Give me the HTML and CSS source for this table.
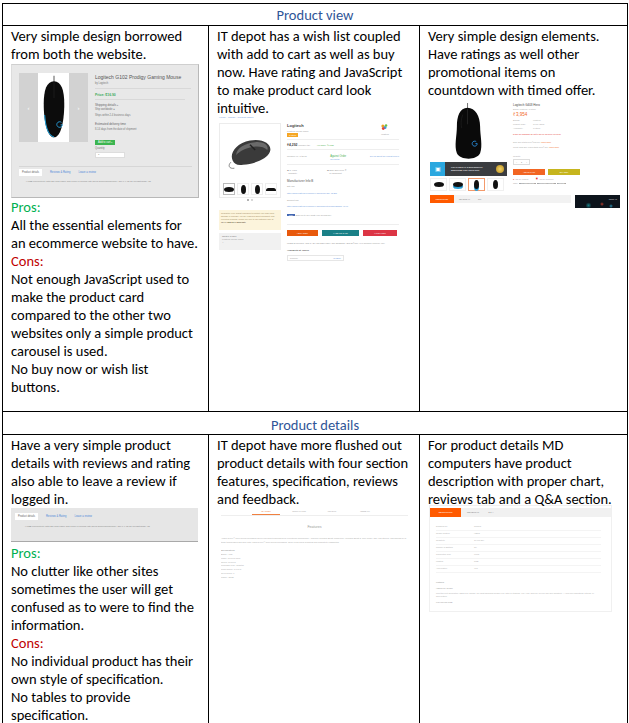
FILE: index.html
```html
<!DOCTYPE html>
<html>
<head>
<meta charset="utf-8">
<link rel="stylesheet" href="styles.css">
</head>
<body>
<table class="doc">
  <colgroup><col class="c1"><col class="c2"><col class="c3"></colgroup>
  <tr><th colspan="3" class="head">Product view</th></tr>
  <tr class="r1">
    <td>
      <div class="txt">Very simple design borrowed<br>from both the website.</div>
      <div class="shot sa">
        <div class="sa-top">
          <div class="carousel">
            <div class="c-side">‹</div>
            <div class="c-mid">
              <svg class="m102" viewBox="0 0 30 68" width="28" height="65">
                <path d="M15 0 V7" stroke="#222" stroke-width="0.8" fill="none"/>
                <path d="M15 6 C7 6 4 16 4 30 C4 50 8 66 15 66 C22 66 26 50 26 30 C26 16 23 6 15 6Z" fill="#0c0c0c"/>
                <path d="M15 7 V24" stroke="#2a2a2a" stroke-width="0.6"/>
                <path d="M5 42 C6 56 9 64 15 65.5" stroke="#1e9fd8" stroke-width="1.1" fill="none"/>
                <path d="M23 50 a3 3 0 1 0 1 2.5 h-2" stroke="#2aa7e8" stroke-width="0.9" fill="none"/>
              </svg>
            </div>
            <div class="c-side">›</div>
          </div>
          <div class="sa-info">
            <div class="sa-title">Logitech G102 Prodigy Gaming Mouse</div>
            <div class="sa-by">by Logitech</div>
            <div class="sa-price">Price: $16.90</div>
            <div class="sa-t">Shipping details ▪</div>
            <div class="sa-s s1">Ship worldwide ●</div>
            <div class="sa-s s2">Ships within 2-4 business days</div>
            <div class="sa-t t2">Estimated delivery time</div>
            <div class="sa-s s2">8-14 days from the date of shipment</div>
            <div class="sa-btn">Add to cart ▪</div>
            <div class="sa-s s2">Quantity</div>
            <div class="sa-qty">1</div>
          </div>
        </div>
        <div class="sa-tabs"><span class="tab-on">Product details</span><span class="tab-link">Reviews &amp; Rating</span><span class="tab-link">Leave a review</span></div>
        <div class="sa-bul">• USB connectivity with 2m long cable and 1000Hz polling rate,wired Dimensions(mm): 116.6 x 62.15 Weight(gms): 85</div>
      </div>
      <div class="txt"><span class="pros">Pros:</span><br>All the essential elements for<br>an ecommerce website to have.<br><span class="cons">Cons:</span><br>Not enough JavaScript used to<br>make the product card<br>compared to the other two<br>websites only a simple product<br>carousel is used.<br>No buy now or wish list<br>buttons.</div>
    </td>
    <td>
      <div class="txt">IT depot has a wish list coupled<br>with add to cart as well as buy<br>now. Have rating and JavaScript<br>to make product card look<br>intuitive.</div>
      <div class="shot sb">
        <div class="sb-crumb">Home › Mouse › Product Name</div>
        <div class="sb-main">
          <div class="sb-left">
            <div class="sb-imgbox">
              <div class="sb-photo">
                <svg viewBox="0 0 60 40" width="52" height="35">
                  <path d="M8 30 C4 34 6 38 12 37" stroke="#444" stroke-width="0.7" fill="none"/>
                  <path d="M10 28 C6 20 14 8 30 5 C46 2 56 10 53 18 C50 26 36 32 22 33 C15 34 12 32 10 28Z" fill="#3a3a3a"/>
                  <path d="M14 22 C14 14 24 8 36 7 C46 6 52 11 50 16 C46 12 38 11 30 13 C22 15 16 19 14 22Z" fill="#6a6a6a"/>
                  <path d="M30 10 L36 16" stroke="#222" stroke-width="1.6"/>
                </svg>
              </div>
              <div class="sb-thumbs">
                <span class="th on"><i class="blob h"></i></span><span class="th"><i class="blob v"></i></span><span class="th"><i class="blob v"></i></span><span class="th"><i class="blob f"></i></span>
              </div>
            </div>
            <div class="sb-dots"><i></i><i class="lt"></i></div>
            <div class="sb-note">Guarantee Free Transit Insurance to protect your order from damage in pilferage. For any enquiries about availability and expected products, please feel free to call customer care at <b>(044)-4022 3647 (Mon-Sat)</b></div>
            <div class="sb-box"><b>What's in Box</b><br>Logitech Mouse M100<br>&nbsp;•</div>
          </div>
          <div class="sb-right">
            <div class="sb-head">
              <div>
                <div class="sb-brand">Logitech</div>
                <div class="sb-sub">Logitech Mouse M100</div>
                <div class="sb-badge">In Stock</div>
              </div>
              <div class="sb-logo">
                <svg viewBox="0 0 20 12" width="14" height="9"><circle cx="7" cy="4" r="2.2" fill="#f0a020"/><circle cx="10" cy="6" r="2.2" fill="#3d9be9"/><circle cx="7.5" cy="7.5" r="2" fill="#e2403b"/><circle cx="11.5" cy="3" r="1.8" fill="#6cc04a"/></svg>
                <div>Logitech</div>
              </div>
            </div>
            <div class="sb-price"><b>₹4,292</b> <span>Inclusive tax</span> <em>You Save ₹ 1,135</em></div>
            <div class="sb-row3"><span>Inclusive of All taxes</span><span class="g">Against Order<br><i>See Detail</i></span><span class="bl">Tell us about the lowest price?</span></div>
            <div class="sb-icons"><span>▣ 3 Years<br>&nbsp;&nbsp;Warranty</span><span>▤ Easy EMI from ₹<br>&nbsp;&nbsp;&nbsp;&nbsp;by Snapmint</span></div>
            <div class="sb-mi">Manufacturer Info:B</div>
            <div class="sb-s s-site">Site link</div>
            <div class="sb-u u1">http://www.logitech.com/index.cfm/home/&amp;cl=IN,EN</div>
            <div class="sb-s s-sup">Support link</div>
            <div class="sb-u u2">http://www.logitech.com/index.cfm/support/downloads&amp;cl=in,en</div>
            <div class="sb-fb"><span>Like</span> Sign Up to see what your friends like.</div>
            <div class="sb-btns"><span class="b1">▪ BUY NOW</span><span class="b2">▪ ADD TO CART</span><span class="b3">▪ WISH LIST</span></div>
            <div class="sb-free">FREE SHIPPING AND CASH ON DELIVERY ON ORDERS ABOVE ₹500 | For advance pincode only</div>
            <div class="sb-av">Availability at 400079</div>
            <div class="sb-pin"><span>Pincode</span><span class="ck">CHECK</span></div>
          </div>
        </div>
      </div>
    </td>
    <td>
      <div class="txt">Very simple design elements.<br>Have ratings as well other<br>promotional items on<br>countdown with timed offer.</div>
      <div class="shot sc">
        <div class="sc-top">
          <div class="sc-left">
            <div class="sc-photo">
              <svg viewBox="0 0 36 60" width="35" height="58">
                <path d="M17 0 V6" stroke="#333" stroke-width="0.7"/>
                <path d="M17 5 C9 5 6 14 6 24 C6 34 3 44 6 52 C9 59 26 60 30 52 C33 44 30 34 30 24 C30 14 25 5 17 5Z" fill="#0a0a0a"/>
                <path d="M17 6 V22" stroke="#333" stroke-width="0.6"/>
                <path d="M26 40 a2.6 2.6 0 1 0 1 2 h-1.8" stroke="#2a8fe0" stroke-width="0.9" fill="none"/>
                <path d="M12 12 C10 18 10 22 11 26" stroke="#222" stroke-width="0.6" fill="none"/>
              </svg>
            </div>
            <div class="sc-banner"><span class="sq">▣</span><span class="bt">LIGHTWEIGHT &amp; ERGONOMIC<br>DESIGNED FOR COMFORT</span><span class="gold"></span></div>
            <div class="sc-thumbs"><span class="t"><i class="blob h"></i></span><span class="t"><i class="blob h bb"></i></span><span class="t on"><i class="blob v bb"></i></span><span class="t"><i class="blob v"></i></span></div>
          </div>
          <div class="sc-right">
            <div class="sc-title">Logitech G403 Hero</div>
            <div class="sc-g">Brand: Logitech | In Stock</div>
            <div class="sc-price">₹3,954</div>
            <div class="sc-spec"><span>Brands:</span><span>Logitech</span></div>
            <div class="sc-spec"><span>Product Code:</span><span>G403 HERO</span></div>
            <div class="sc-spec"><span>Availability:</span><span>In Stock</span></div>
            <div class="sc-red">● Offer On Cashback Of Flat ₹1 Off For Payment Via Paytm</div>
            <div class="sc-g l1">Easy EMI starts from ₹186/mo. <i>Know more</i></div>
            <div class="sc-g l2">Credit Card EMI Plans starts from ₹186. <i>Know more</i></div>
            <div class="sc-g l3">Quantity</div>
            <div class="sc-qty"><span>−</span><span>1</span><span>+</span></div>
            <div class="sc-btns"><span class="o">ADD TO CART</span><span class="y">BUY NOW</span></div>
            <div class="sc-wl"><span><b>♥</b> Add To Wishlist</span><span><b>⇄</b> Add To Compare</span></div>
            <div class="sc-tags">Tags: <span>GAMING MOUSE</span><span>LOGITECH MOUSE</span><span>MOUSE</span></div>
          </div>
        </div>
        <div class="sc-bottom">
          <div class="sc-tabbar"><span class="on">DESCRIPTION</span><span>REVIEWS (0)</span><span>Q&amp;A</span></div>
          <div class="sc-dark"><span>CORSAIR</span></div>
        </div>
      </div>
    </td>
  </tr>
  <tr><th colspan="3" class="head head2">Product details</th></tr>
  <tr class="r2">
    <td>
      <div class="txt">Have a very simple product<br>details with reviews and rating<br>also able to leave a review if<br>logged in.</div>
      <div class="shot sd">
        <div class="sa-tabs"><span class="tab-on">Product details</span><span class="tab-link">Reviews &amp; Rating</span><span class="tab-link">Leave a review</span></div>
        <div class="sa-bul">• USB connectivity with 2m long cable and 1000Hz polling rate,wired Dimensions(mm): 116.6 x 62.15 Weight(gms): 85</div>
      </div>
      <div class="txt"><span class="pros">Pros:</span><br>No clutter like other sites<br>sometimes the user will get<br>confused as to were to find the<br>information.<br><span class="cons">Cons:</span><br>No individual product has their<br>own style of specification.<br>No tables to provide<br>specification.</div>
    </td>
    <td>
      <div class="txt">IT depot have more flushed out<br>product details with four section<br>features, specification, reviews<br>and feedback.</div>
      <div class="shot se">
        <div class="se-tabs"><span class="on">FEATURES</span><span>SPECIFICATION</span><span>REVIEWS</span><span>FEEDBACK</span></div>
        <div class="se-h">Features</div>
        <div class="se-p">AMD's Ryzen™ 5000 Series processors deliver unrivaled technologies for exceptional performance – Superior Precision Boost (Turbo/curr), Precision Boost 2, Pure Power, and AMD StoreMI, and harness all of these technologies and more with AMD's Ryzen™ 5000 Series processors. Open a new world of gaming and productivity possibilities.</div>
        <div class="se-b">Specifications</div>
        <div class="se-l">Brand : AMD<br>Model : Ryzen 5 3600<br>Series : Ryzen 5<br>Processor Type : Desktop<br>Clock Speed : 3.6 GHz<br>No of Cores : 6<br>Cache : 35MB</div>
      </div>
    </td>
    <td>
      <div class="txt">For product details MD<br>computers have product<br>description with proper chart,<br>reviews tab and a Q&amp;A section.</div>
      <div class="shot sf">
        <div class="sf-tabbar"><span class="on">DESCRIPTION</span><span>REVIEWS (0)</span><span>Q &amp; A</span></div>
        <div class="sf-table">
          <div class="sf-r"><span>Designed for</span><span>Gamers</span></div>
          <div class="sf-r"><span>Sensor System</span><span>HERO</span></div>
          <div class="sf-r"><span>Sensitivity</span><span>16,000 DPI</span></div>
          <div class="sf-r"><span>Number of Buttons</span><span>Six</span></div>
          <div class="sf-r"><span>Connection Type</span><span>Wired</span></div>
          <div class="sf-r"><span>Lighting</span><span>RGB</span></div>
          <div class="sf-r"><span>Acceleration</span><span>40G</span></div>
        </div>
        <div class="sf-h">Features</div>
        <div class="sf-h2">HERO 16K Sensor</div>
        <div class="sf-p">Meet the next generation HERO 16K Sensor, our most advanced sensor ever, with 1:1 tracking, 400+ IPS, and 100–16,000 max DPI sensitivity — plus zero smoothing, filtering, or acceleration.</div>
        <div class="sf-h2">LIGHTSYNC RGB</div>
      </div>
    </td>
  </tr>
</table>
</body>
</html>
```

FILE: styles.css
```css
html, body { background: #fff; }
body { margin: 0; font-family: Carlito, Lato, "Liberation Sans", sans-serif; color: #000; }

.doc { border-collapse: collapse; table-layout: fixed; width: 625px; margin: 3px 0 0 2px; }
.c1 { width: 206px; } .c2 { width: 211px; } .c3 { width: 208px; }
.doc td, .doc th { border: 1px solid #000; vertical-align: top; padding: 1px 6px 0 8px; }
.doc .head { color: #2f5597; font-weight: normal; font-size: 14.5px; line-height: 20px; height: 20px; padding: 1px 0 0; text-align: center; }
.doc .head2 { height: auto; line-height: 18px; padding: 4px 0 0; }
.r1 td { height: 384px; }
.doc .r2 td { padding-bottom: 12px; }
.txt { font-size: 14.5px; line-height: 18px; white-space: nowrap; }
.pros { color: #00b050; }
.cons { color: #c00000; }

/* shared mockup */
.shot { font-family: "Liberation Sans", sans-serif; color: #8a8a8a; white-space: nowrap; overflow: hidden; font-size: 3px; line-height: 4px; }
.blob { display: block; background: #111; border-radius: 50%; }
.blob.h { width: 10px; height: 5px; }
.blob.v { width: 5px; height: 9px; }
.blob.f { width: 10px; height: 3px; border-radius: 5px 5px 1px 1px; }
.blob.bb { box-shadow: 0 2px 0 #2a9fd6; }

/* A: first site product card */
.sa { width: 186px; height: 132px; margin-top: 1px; background: #e8e8e8; border: 1px solid #b8b8b8; border-top-color: #cfcfcf; border-left-color: #dcdcdc; }
.sa-top { display: flex; height: 93px; padding: 8px 0 0 7px; }
.carousel { display: flex; width: 69px; height: 69px; }
.c-side { width: 19px; background: #d2d2d2; color: #fff; font-size: 6px; display: flex; align-items: center; justify-content: center; }
.c-mid { width: 31px; background: #fff; display: flex; align-items: center; justify-content: center; }
.sa-info { margin: 1px 0 0 7px; width: 96px; color: #777; }
.sa-title { font-size: 5px; line-height: 6px; color: #555; }
.sa-by { font-size: 2.6px; line-height: 4px; margin-top: 2px; padding-bottom: 2px; border-bottom: 1px solid #d8d8d8; }
.sa-price { color: #3daa5c; font-weight: bold; font-size: 3.4px; line-height: 5px; margin-top: 4px; padding-bottom: 1px; border-bottom: 1px solid #d8d8d8; width: 90px; }
.sa-t { color: #666; font-size: 3px; margin-top: 3px; }
.sa-t.t2 { margin-top: 4px; }
.sa-s { font-size: 2.6px; margin-top: 2px; }
.sa-s.s1 { margin-top: 1px; }
.sa-btn { display: inline-block; background: #3cb550; color: #fff; font-size: 2.6px; line-height: 5px; padding: 0 3px; margin-top: 8px; }
.sa-qty { width: 30px; height: 6px; background: #fff; border: 1px solid #ddd; box-sizing: border-box; font-size: 2.5px; line-height: 4px; padding-left: 2px; margin-top: 1px; }
.sa-tabs { margin: 0 6px 0 7px; border-top: 1px solid #d6d6d6; padding-top: 2px; display: flex; align-items: center; }
.tab-on { background: #fff; color: #666; font-size: 2.6px; line-height: 7px; padding: 0 3px; width: 17px; }
.tab-link { color: #4b86d8; font-size: 2.6px; margin-left: 8px; }
.sa-bul { font-size: 2.4px; line-height: 4px; margin: 4px 0 0 14px; color: #888; }

/* B: IT depot */
.sb { width: 192px; height: 148px; margin-top: -1px; padding-left: 2px; }
.sb-crumb { color: #6f9be0; font-size: 2.5px; line-height: 4px; }
.sb-main { display: flex; margin-top: 3px; }
.sb-left { width: 62px; }
.sb-imgbox { height: 73px; border: 1px solid #ececec; display: flex; flex-direction: column; }
.sb-photo { height: 59px; display: flex; align-items: center; justify-content: center; }
.sb-thumbs { display: flex; gap: 2px; padding-left: 3px; }
.sb-thumbs .th { width: 12px; height: 12px; border: 1px solid #eee; box-sizing: border-box; display: flex; align-items: center; justify-content: center; }
.sb-thumbs .th.on { border-color: #bbb; }
.sb-dots { display: flex; justify-content: center; gap: 2px; margin-top: 1px; }
.sb-dots i { width: 2px; height: 2px; border-radius: 50%; background: #999; }
.sb-dots i.lt { background: #ccc; }
.sb-note { margin-top: 9px; height: 20px; background: #fcf4dc; color: #a08a60; font-size: 2px; line-height: 3px; white-space: normal; padding: 2px 2px 0; box-sizing: border-box; }
.sb-note b { color: #6a5a40; }
.sb-box { margin-top: 3px; height: 17px; background: #f1f1f1; font-size: 2.2px; line-height: 3px; padding: 2px 3px 0; box-sizing: border-box; color: #999; }
.sb-right { width: 112px; margin-left: 6px; color: #999; font-size: 2.2px; line-height: 3px; }
.sb-right > div { line-height: 3px; }
.sb-head { display: flex; justify-content: space-between; border-bottom: 1px solid #eee; padding-bottom: 2px; }
.sb-head .sb-brand { color: #444; font-size: 4px; line-height: 5px; font-weight: bold; }
.sb-head .sb-sub { font-size: 2.2px; line-height: 4px; margin-top: 1px; }
.sb-badge { display: inline-block; background: #f5a623; color: #fff; font-size: 2px; line-height: 4px; padding: 0 2px; vertical-align: top; }
.sb-logo { width: 20px; text-align: center; font-size: 2px; line-height: 3px; margin-right: 4px; }
.sb-right .sb-price { border-bottom: 1px solid #eee; padding: 3px 0 2px; line-height: 4px; }
.sb-price b { color: #444; font-size: 3.4px; }
.sb-price em { color: #4caf50; font-style: normal; margin-left: 6px; }
.sb-row3 { display: flex; justify-content: space-between; align-items: flex-start; border-bottom: 1px solid #eee; padding: 5px 0 3px; }
.sb-row3 .g { color: #4caf50; font-size: 2.6px; }
.sb-row3 .g i { color: #6f9be0; font-style: normal; font-size: 2px; }
.sb-row3 .bl { color: #6f9be0; }
.sb-icons { display: flex; gap: 30px; margin-top: 4px; }
.sb-right .sb-mi { color: #555; font-size: 3px; margin-top: 5px; }
.sb-s.s-site { margin-top: 2px; }
.sb-u.u1 { color: #6f9be0; margin-top: 4px; }
.sb-s.s-sup { margin-top: 4px; }
.sb-u.u2 { color: #6f9be0; margin-top: 3px; }
.sb-fb { margin-top: 6px; }
.sb-fb span { background: #4267b2; color: #fff; padding: 0 2px; }
.sb-btns { display: flex; gap: 4px; border-top: 1px solid #eee; padding-top: 5px; margin-top: 7px; }
.sb-btns span { color: #fff; font-size: 2px; line-height: 6px; text-align: center; }
.sb-right .sb-btns span { line-height: 6px; }
.sb-btns .b1 { background: #e8590c; width: 31px; }
.sb-btns .b2 { background: #1a8087; width: 37px; }
.sb-btns .b3 { background: #dc3545; width: 34px; }
.sb-free { margin-top: 6px; }
.sb-av { color: #555; font-weight: bold; margin-top: 4px; }
.sb-right .sb-pin { display: flex; justify-content: space-between; width: 57px; height: 6px; border: 1px solid #e6e6e6; box-sizing: border-box; padding: 0 2px; margin-top: 3px; line-height: 4px; }
.sb-pin .ck { color: #6f9be0; }

/* C: MD computers */
.sc { width: 192px; height: 111px; margin-top: 1px; }
.sc-top { display: flex; }
.sc-left { width: 77px; padding-left: 2px; }
.sc-photo { height: 61px; display: flex; justify-content: center; align-items: flex-end; }
.sc-banner { margin-top: 1px; height: 14px; background: #3b3d40; display: flex; align-items: center; }
.sc-banner .sq { width: 15px; height: 14px; background: #2aa7df; color: #fff; font-size: 6px; line-height: 14px; text-align: center; }
.sc-banner .bt { color: #fff; font-size: 2.2px; line-height: 3px; margin-left: 6px; flex: 1; }
.sc-banner .gold { width: 8px; height: 8px; border-radius: 50%; background: radial-gradient(#f3d36a, #b98d1a); margin-right: 3px; }
.sc-thumbs { display: flex; gap: 2px; margin-top: 2px; }
.sc-thumbs .t { width: 17px; height: 13px; box-sizing: border-box; border: 1px solid #f0f0f0; display: flex; align-items: center; justify-content: center; }
.sc-thumbs .t.on { border-color: #f39a6b; }
.sc-right { margin-left: 6px; width: 72px; font-size: 2px; line-height: 3px; color: #aaa; }
.sc-title { color: #444; font-size: 3px; line-height: 4px; margin-top: 3px; }
.sc-g { margin-top: 1px; }
.sc-price { color: #f26522; font-size: 4.5px; line-height: 6px; margin-top: 1px; }
.sc-spec { display: flex; margin-top: 1px; }
.sc-spec span:first-child { width: 20px; }
.sc-red { color: #e53935; margin-top: 3px; font-size: 1.8px; }
.sc-g.l1 { margin-top: 5px; }
.sc-g.l2 { margin-top: 2px; }
.sc-g.l3 { margin-top: 6px; }
.sc-g i { color: #f26522; font-style: normal; }
.sc-qty { display: flex; width: 17px; height: 6px; border: 1px solid #ddd; box-sizing: border-box; margin-top: 1px; line-height: 4px; color: #666; }
.sc-qty span { flex: 1; text-align: center; }
.sc-btns { display: flex; gap: 3px; margin-top: 4px; }
.sc-btns span { width: 32px; line-height: 6px; color: #fff; text-align: center; font-size: 1.8px; }
.sc-btns .o { background: #f26522; }
.sc-btns .y { background: #c6b51e; }
.sc-wl { display: flex; gap: 8px; margin-top: 3px; }
.sc-wl b { color: #e53935; }
.sc-tags { margin-top: 1px; }
.sc-tags span { background: #a8a8a8; color: #eee; padding: 0 2px; margin-left: 1px; font-size: 1.6px; }
.sc-bottom { display: flex; align-items: flex-start; margin-top: 4px; }
.sc-tabbar { width: 141px; height: 8px; background: #f2f2f2; margin-left: 2px; display: flex; align-items: center; font-size: 1.8px; color: #777; }
.sc-tabbar span { margin-right: 8px; }
.sc-tabbar span.on { background: #ff5a00; color: #fff; width: 24px; height: 8px; line-height: 8px; text-align: center; margin-right: 5px; }
.sc-dark { width: 45px; height: 13px; margin-left: 4px; background: radial-gradient(circle at 30% 80%, #1b7f86 0, transparent 3px), radial-gradient(circle at 60% 70%, #b63b2c 0, transparent 2px), radial-gradient(circle at 80% 85%, #2a8fb0 0, transparent 2px), #0d141c; color: #ddd; font-size: 1.8px; text-align: right; padding: 2px 3px 0 0; box-sizing: border-box; }

/* D: product details tab */
.sd { width: 187px; height: 34px; background: #e6e6e6; border-bottom: 1px solid #a9a9a9; box-sizing: border-box; }
.sd .sa-tabs { border-top: 0; margin: 0 0 0 4px; padding-top: 5px; }
.sd .sa-bul { margin: 5px 0 0 14px; }
.sd + .txt { margin-top: 2px; }

/* E: IT depot details */
.se { width: 187px; height: 92px; margin: 1px 0 0 4px; color: #aaa; }
.se-tabs { display: flex; border-bottom: 1px solid #eee; font-size: 1.8px; line-height: 5px; padding-left: 31px; }
.se-tabs span { width: 28px; margin-right: 5px; text-align: center; }
.se-tabs span.on { color: #f08040; border-bottom: 1px solid #f08040; }
.se-h { text-align: center; font-size: 3.6px; line-height: 5px; margin-top: 9px; color: #999; }
.se-p { white-space: normal; font-size: 2px; line-height: 3.5px; margin-top: 7px; }
.se-b { font-size: 2.2px; color: #888; margin-top: 4px; }
.se-l { font-size: 2px; line-height: 3.8px; margin-top: 1px; }

/* F: MD computers details */
.sf { width: 183px; height: 107px; margin: -3px 0 0 1px; border: 1px solid #f0f0f0; box-sizing: border-box; color: #b0b0b0; font-size: 2px; line-height: 3px; }
.sf-tabbar { display: flex; align-items: center; height: 9px; background: #f1f1f1; margin-top: 2px; color: #777; }
.sf-tabbar span { margin-right: 9px; }
.sf-tabbar span.on { background: #ff5a00; color: #fff; width: 31px; height: 9px; line-height: 9px; text-align: center; margin-right: 6px; }
.sf-table { margin: 7px 10px 0 6px; }
.sf-r { display: flex; height: 7px; line-height: 4px; border-bottom: 1px solid #f4f4f4; box-sizing: border-box; }
.sf-r span:first-child { width: 38px; }
.sf-h { margin: 8px 0 0 6px; color: #888; }
.sf-h2 { margin: 3px 0 0 6px; color: #999; }
.sf-p { white-space: normal; margin: 2px 6px 0 6px; }
```
